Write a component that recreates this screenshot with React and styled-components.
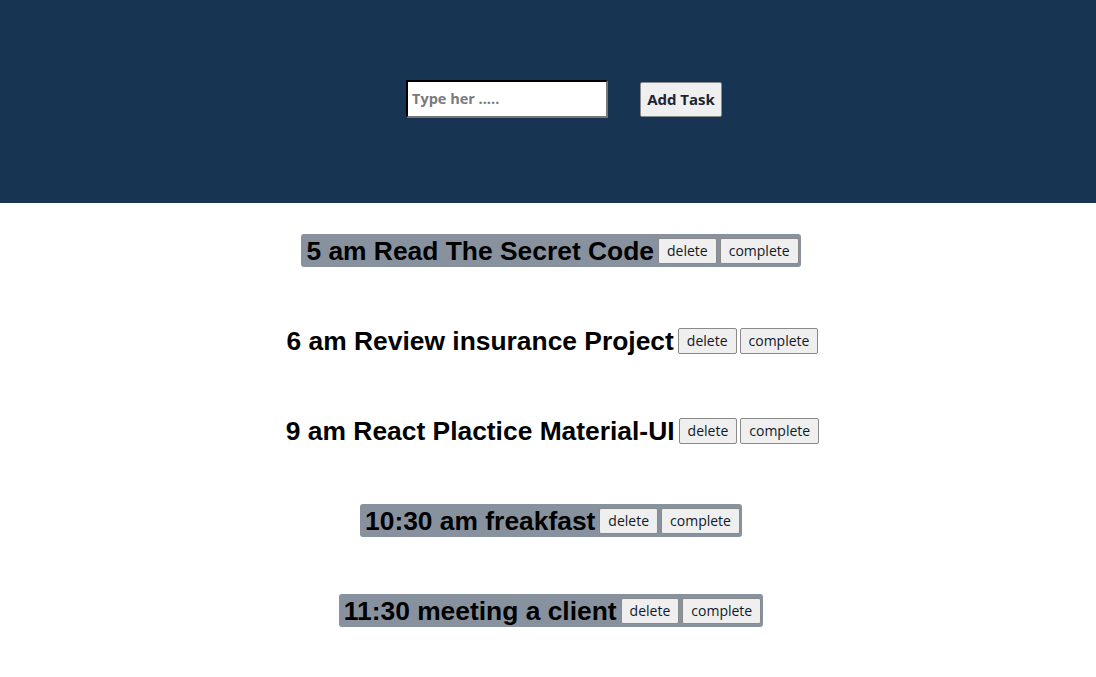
import React, { useState } from 'react'
import styled, { createGlobalStyle } from 'styled-components'

const GlobalStyle = createGlobalStyle`
  body {
    margin: 0;
    font-family: "Liberation Sans", Arial, sans-serif;
    background: #ffffff;
  }
`;

const initialTasks = [
  { id: 1, text: '5 am Read The Secret Code', done: true },
  { id: 2, text: '6 am Review insurance Project', done: false },
  { id: 3, text: '9 am React Plactice Material-UI', done: false },
  { id: 4, text: '10:30 am freakfast', done: true },
  { id: 5, text: '11:30 meeting a client', done: true },
];

const App = () => {
  const [tasks, setTasks] = useState(initialTasks);
  const [value, setValue] = useState('');

  const addTask = () => {
    if (!value.trim()) return;
    setTasks([...tasks, { id: Date.now(), text: value, done: false }]);
    setValue('');
  };

  const removeTask = (id) => setTasks(tasks.filter((t) => t.id !== id));
  const toggleTask = (id) =>
    setTasks(tasks.map((t) => (t.id === id ? { ...t, done: !t.done } : t)));

  return (
    <>
      <GlobalStyle />
      <Header>
        <Input
          placeholder="Type her ....."
          value={value}
          onChange={(e) => setValue(e.target.value)}
        />
        <AddButton onClick={addTask}>Add Task</AddButton>
      </Header>
      <List>
        {tasks.map((task) => (
          <Task key={task.id} done={task.done}>
            <Title>{task.text}</Title>
            <SmallButton onClick={() => removeTask(task.id)}>delete</SmallButton>
            <SmallButton onClick={() => toggleTask(task.id)}>complete</SmallButton>
          </Task>
        ))}
      </List>
    </>
  );
};

const Header = styled.div`
display: flex;
align-items: center;
justify-content: center;
gap: 32px;
height: 203px;
padding-left: 32px;
padding-bottom: 6px;
box-sizing: border-box;
background-color: #173452;
`;

const Input = styled.input`
width: 202px;
height: 38px;
box-sizing: border-box;
padding: 0 4px;
border: 2px inset #767676;
border-top-color: #1e1e1e;
border-left-color: #1e1e1e;
background: #ffffff;
font-family: "Open Sans", "Noto Sans", sans-serif;
font-weight: 700;
font-size: 14.5px;
outline: none;
&::placeholder {
    color: #7a7a7a;
}
`;

const AddButton = styled.button`
width: 82px;
height: 35px;
margin-top: 1px;
background: #efefef;
border: 1px solid #8a8a8a;
border-radius: 2px;
color: #1b2433;
font-family: "Open Sans", "Noto Sans", sans-serif;
font-weight: 700;
font-size: 15px;
padding: 0;
cursor: pointer;
`;

const List = styled.div`
display: flex;
flex-direction: column;
align-items: center;
gap: 57px;
padding-top: 31px;
padding-left: 6px;
`;

const Task = styled.div`
display: flex;
align-items: center;
gap: 3px;
height: 33px;
box-sizing: border-box;
padding: 0 2px 0 5px;
border-radius: 3px;
background-color: ${(p) => (p.done ? '#87929e' : 'transparent')};
`;

const Title = styled.h2`
margin: 0 1px 0 0;
font-family: "Liberation Sans", Arial, sans-serif;
font-size: 26.4px;
font-weight: 700;
color: #000000;
line-height: 30px;
`;

const SmallButton = styled.button`
height: 26px;
padding: 0 8px;
background: #efefef;
border: 1px solid #8a8a8a;
border-radius: 2px;
color: #101828;
font-family: "Open Sans", "Noto Sans", sans-serif;
font-size: 14px;
cursor: pointer;
`;

export default App
